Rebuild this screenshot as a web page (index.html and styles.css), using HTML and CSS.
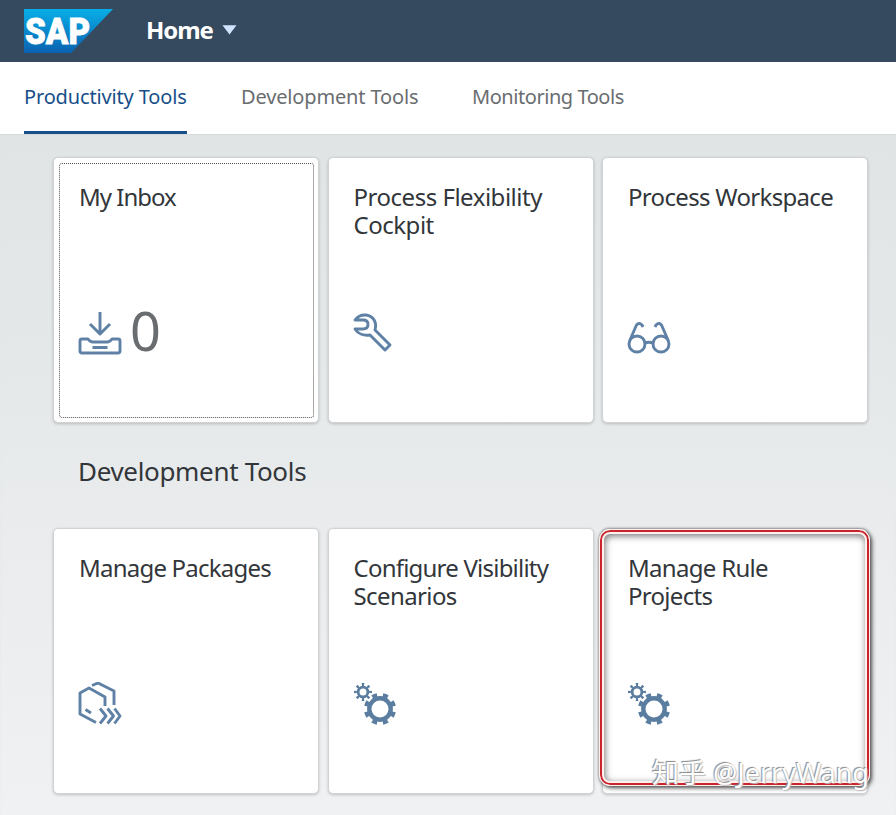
FILE: index.html
```html
<!DOCTYPE html>
<html lang="en">
<head>
<meta charset="utf-8">
<title>Home</title>
<link rel="stylesheet" href="styles.css">
</head>
<body>
<svg class="defs" aria-hidden="true">
  <symbol id="gears" viewBox="0 0 44 44">
    <g fill="none" stroke="currentColor">
      <circle cx="27" cy="27" r="10.7" stroke-width="4.400"/>
      <circle cx="27" cy="27" r="13.7" stroke-width="4.800" pathLength="80" stroke-dasharray="4.6 5.4" stroke-dashoffset="-2.7"/>
      <circle cx="10" cy="10" r="4.900" stroke-width="2.800"/>
      <circle cx="10" cy="10" r="7.300" stroke-width="3.400" pathLength="80" stroke-dasharray="4 6" stroke-dashoffset="2"/>
    </g>
  </symbol>
</svg>
<header class="shell">
  <svg class="logo" viewBox="0 0 89 44">
    <defs><linearGradient id="blue" x1="0" y1="0" x2="0" y2="1"><stop offset="0" stop-color="#08aee8"/><stop offset="1" stop-color="#0b62b0"/></linearGradient></defs>
    <path d="M0 0H89L47 44H0Z" fill="url(#blue)"/>
    <text class="logo-text" x="1" y="35" textLength="65" lengthAdjust="spacingAndGlyphs">SAP</text>
  </svg>
  <span class="home">Home</span>
  <svg class="caret" viewBox="0 0 15 10"><path d="M.5 .3H14.500L7.5 9.5Z"/></svg>
</header>
<nav class="tabs">
  <a class="tab active">Productivity Tools</a>
  <a class="tab dev">Development Tools</a>
  <a class="tab mon">Monitoring Tools</a>
</nav>
<main>
  <section class="tiles">
    <article class="tile focused">
      <h3 class="t-inbox">My Inbox</h3>
      <div class="content">
        <svg class="icon" viewBox="0 0 44 44"><path d="M22 1V22M12 13L22 23L32 13M4 28H10Q12 31 15 31H29Q32 31 34 28H40Q42 28 42 30V40Q42 42 40 42H4Q2 42 2 40V30Q2 28 4 28ZM14.500 36.500H29.500"/></svg>
        <span class="count">0</span>
      </div>
    </article>
    <article class="tile">
      <h3 class="t-flex">Process Flexibility<br>Cockpit</h3>
      <div class="content"><svg class="icon" viewBox="0 0 44 44"><path d="M2 9Q6 3.500 13 4C21 5 24 12 22 19L37 34L32 39L17 24C11 25 5 23 2 18H10Q15 18 15 13.500Q15 9 10 9Z"/></svg></div>
    </article>
    <article class="tile">
      <h3 class="t-space">Process Workspace</h3>
      <div class="content"><svg class="icon" viewBox="0 0 44 44"><circle cx="10" cy="33" r="8"/><circle cx="34" cy="33" r="8"/><path d="M18 32Q22 30.500 26 32M3 29L9.500 14Q12 11 15 14L16 16M41 29L34.500 14Q32 11 29 14L28 16"/></svg></div>
    </article>
  </section>
  <h2>Development Tools</h2>
  <section class="tiles">
    <article class="tile">
      <h3 class="t-pack">Manage Packages</h3>
      <div class="content"><svg class="icon" viewBox="0 0 44 44"><path d="M18 40.500L2 32V11L11 6L27 15V24M14 3.500L20 1L36 9V23M7.500 27.500L13 31"/><path d="M22 26.500L28 34L22 41.500M29.500 26.500L35.500 34L29.500 41.500M36.500 26.500L42 34L36.500 41.500"/></svg></div>
    </article>
    <article class="tile">
      <h3 class="t-conf">Configure Visibility<br><span>Scenarios</span></h3>
      <div class="content"><svg class="icon"><use href="#gears"/></svg></div>
    </article>
    <article class="tile">
      <h3 class="t-rule">Manage Rule<br>Projects</h3>
      <div class="content"><svg class="icon"><use href="#gears"/></svg></div>
      <div class="highlight"></div>
    </article>
  </section>
</main>
<div class="watermark">知乎 @JerryWang</div>
</body>
</html>
```
FILE: styles.css
```css
* { box-sizing: border-box; }
html, body { height: 100%; }
body {
  margin: 0;
  display: flex;
  flex-direction: column;
  overflow: hidden;
  position: relative;
  font-family: "Noto Sans", sans-serif;
  color: #32363a;
}
.defs { position: absolute; width: 0; height: 0; }
.shell {
  flex: none;
  height: 62px;
  padding-left: 24px;
  display: flex;
  align-items: center;
  background: #354a5f;
}
.logo { width: 89px; height: 44px; }
.logo-text { font: 900 36px "Roboto", sans-serif; fill: #fff; stroke: #fff; stroke-width: .8; }
.home { margin: -3px 0 0 33px; font-size: 24px; font-weight: 700; letter-spacing: -1.1px; line-height: 30px; color: #fff; width: 68px; white-space: nowrap; }
.caret { width: 15px; height: 10px; margin: -2px 0 0 8px; fill: #d1e4ff; }
.tabs {
  flex: none;
  height: 72px;
  padding-left: 24px;
  display: flex;
  gap: 54px;
  background: #fff;
}
.tab {
  width: 163px;
  height: 72px;
  padding-top: 21px;
  font-size: 20px;
  letter-spacing: -.15px;
  line-height: 28px;
  white-space: nowrap;
  color: #6a6d70;
}
.tab.dev { width: 177px; }
.tab.mon { letter-spacing: -.45px; }
.tab.active { color: #174f89; border-bottom: 3px solid #174f89; }
main {
  flex: 1;
  padding: 23px 28px 0 53px;
  background: linear-gradient(#e0e4e5, #f0f1f3);
  box-shadow: inset 0 1px 1px #d5d9dc;
}
.tiles { display: grid; grid-template-columns: repeat(3, 266px); column-gap: 8.500px; }
.tile {
  position: relative;
  height: 266px;
  padding: 25px 25px 0;
  border: 1px solid #d0d3d5;
  border-radius: 5px;
  background: #fff;
  box-shadow: 0 1px 3px rgba(0, 0, 0, .2);
}
.focused::after { content: ""; position: absolute; inset: 5px 4px 4px 5px; border: 1px dotted #555; border-radius: 3px; }
h3 { margin: 0; height: 128px; font-size: 24px; font-weight: 400; line-height: 28px; white-space: nowrap; }
.t-inbox { letter-spacing: -1px; }
.t-flex { letter-spacing: -.48px; }
.t-space { letter-spacing: -.68px; }
.t-pack { letter-spacing: -.78px; }
.t-conf { letter-spacing: -.78px; }
.t-conf span { letter-spacing: -.6px; }
.t-rule { letter-spacing: -.7px; }
.content { display: flex; align-items: flex-start; gap: 8px; }
.icon { width: 44px; height: 44px; margin-left: -1px; fill: none; stroke: #5e81a5; stroke-width: 2.900; stroke-linejoin: round; color: #5a7da0; }
.count { margin-top: -3px; font-size: 54px; line-height: 44px; color: #6a6d70; }
h2 { margin: 31px 0 40px 25px; height: 34px; font-size: 26px; letter-spacing: -.33px; font-weight: 400; line-height: 34px; white-space: nowrap; }
.highlight {
  position: absolute;
  left: -4px;
  top: 0;
  width: 271px;
  height: 257px;
  border: 1px solid #fff0ee;
  border-radius: 11px;
  box-shadow: 2px 2px 4px #555, 0 0 3px #777, inset 0 0 0 2px #c9242b, inset 0 0 0 4px #fff0ee, inset 1px 2px 7px 4px #777;
}
.watermark {
  position: absolute;
  left: 652px;
  top: 757px;
  font: 27px/32px "Noto Sans", "Noto Sans CJK SC", sans-serif;
  color: #fff;
  text-shadow: -1px -1px 1px #888, 1px 1px 1px #bbb;
  white-space: nowrap;
}
```
